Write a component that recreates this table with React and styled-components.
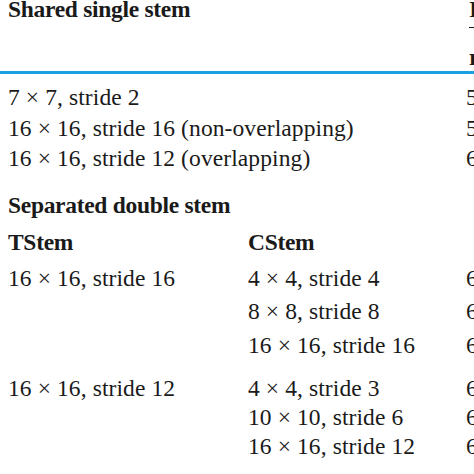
import React from "react";
import styled, { createGlobalStyle } from "styled-components";

const Global = createGlobalStyle`
  html, body { margin: 0; padding: 0; background: #ffffff; }
  body { width: 474px; height: 474px; overflow: hidden; }
`;

const Table = styled.div`
  width: 474px;
  height: 474px;
  overflow: hidden;
  font-family: "Liberation Serif", "Times New Roman", serif;
  font-size: 23.5px;
  letter-spacing: 0.1px;
  color: #1a1a1a;
  background: #fff;
`;

const Head = styled.div`
  height: 71px;
  border-bottom: 3px solid #1ba1e2;
  display: grid;
  grid-template-columns: 8px 457px 1fr;
`;

const HeadLeft = styled.div`
  grid-column: 2;
  font-weight: bold;
  letter-spacing: -0.3px;
  line-height: 17px;
  padding-top: 1px;
  white-space: nowrap;
`;

const HeadRight = styled.div`
  grid-column: 3;
  display: flex;
  flex-direction: column;
  font-weight: bold;
  white-space: nowrap;
  padding-left: 4px;
`;

const HeadTop = styled.div`
  line-height: 17px;
  padding-top: 1px;
  height: 28px;
  box-sizing: border-box;
  border-bottom: 1.5px solid #1a1a1a;
`;

const HeadBottom = styled.div`
  line-height: 22px;
  padding-top: 18px;
`;

const Body = styled.div`
  padding-top: 8px;
  display: flex;
  flex-direction: column;
`;

const Row = styled.div`
  height: ${(p) => p.$h}px;
  line-height: ${(p) => p.$h}px;
  margin-top: ${(p) => p.$gap}px;
  display: grid;
  grid-template-columns: 8px 240px 218px 1fr;
  white-space: nowrap;
`;

const Cell = styled.div`
  grid-column: ${(p) => p.$col};
  font-weight: ${(p) => (p.$bold ? "bold" : "normal")};
  letter-spacing: ${(p) => (p.$bold ? "-0.3px" : "0.1px")};
`;

const WideCell = styled(Cell)`
  grid-column: 2 / span 2;
`;

const rows = [
  { h: 30, gap: 0, a: "7 × 7, stride 2", v: "5" },
  { h: 30, gap: 1, a: "16 × 16, stride 16 (non-overlapping)", wide: true, v: "5" },
  { h: 30, gap: 0, a: "16 × 16, stride 12 (overlapping)", wide: true, v: "6" },
  { h: 30, gap: 17, a: "Separated double stem", wide: true, bold: true },
  { h: 30, gap: 7, a: "TStem", b: "CStem", bold: true },
  { h: 30, gap: 6, a: "16 × 16, stride 16", b: "4 × 4, stride 4", v: "6" },
  { h: 30, gap: 3, b: "8 × 8, stride 8", v: "6" },
  { h: 30, gap: 4, b: "16 × 16, stride 16", v: "6" },
  { h: 30, gap: 13, a: "16 × 16, stride 12", b: "4 × 4, stride 3", v: "6" },
  { h: 29, gap: 0, b: "10 × 10, stride 6", v: "6" },
  { h: 29, gap: 0, b: "16 × 16, stride 12", v: "6" },
];

export default function App() {
  return (
    <>
      <Global />
      <Table>
        <Head>
          <HeadLeft>Shared single stem</HeadLeft>
          <HeadRight>
            <HeadTop>I</HeadTop>
            <HeadBottom>r</HeadBottom>
          </HeadRight>
        </Head>
        <Body>
          {rows.map((r, i) => (
            <Row key={i} $h={r.h} $gap={r.gap}>
              {r.wide ? (
                <WideCell $col={2} $bold={r.bold}>{r.a}</WideCell>
              ) : (
                <>
                  <Cell $col={2} $bold={r.bold}>{r.a || ""}</Cell>
                  <Cell $col={3} $bold={r.bold}>{r.b || ""}</Cell>
                </>
              )}
              <Cell $col={4}>{r.v || ""}</Cell>
            </Row>
          ))}
        </Body>
      </Table>
    </>
  );
}
